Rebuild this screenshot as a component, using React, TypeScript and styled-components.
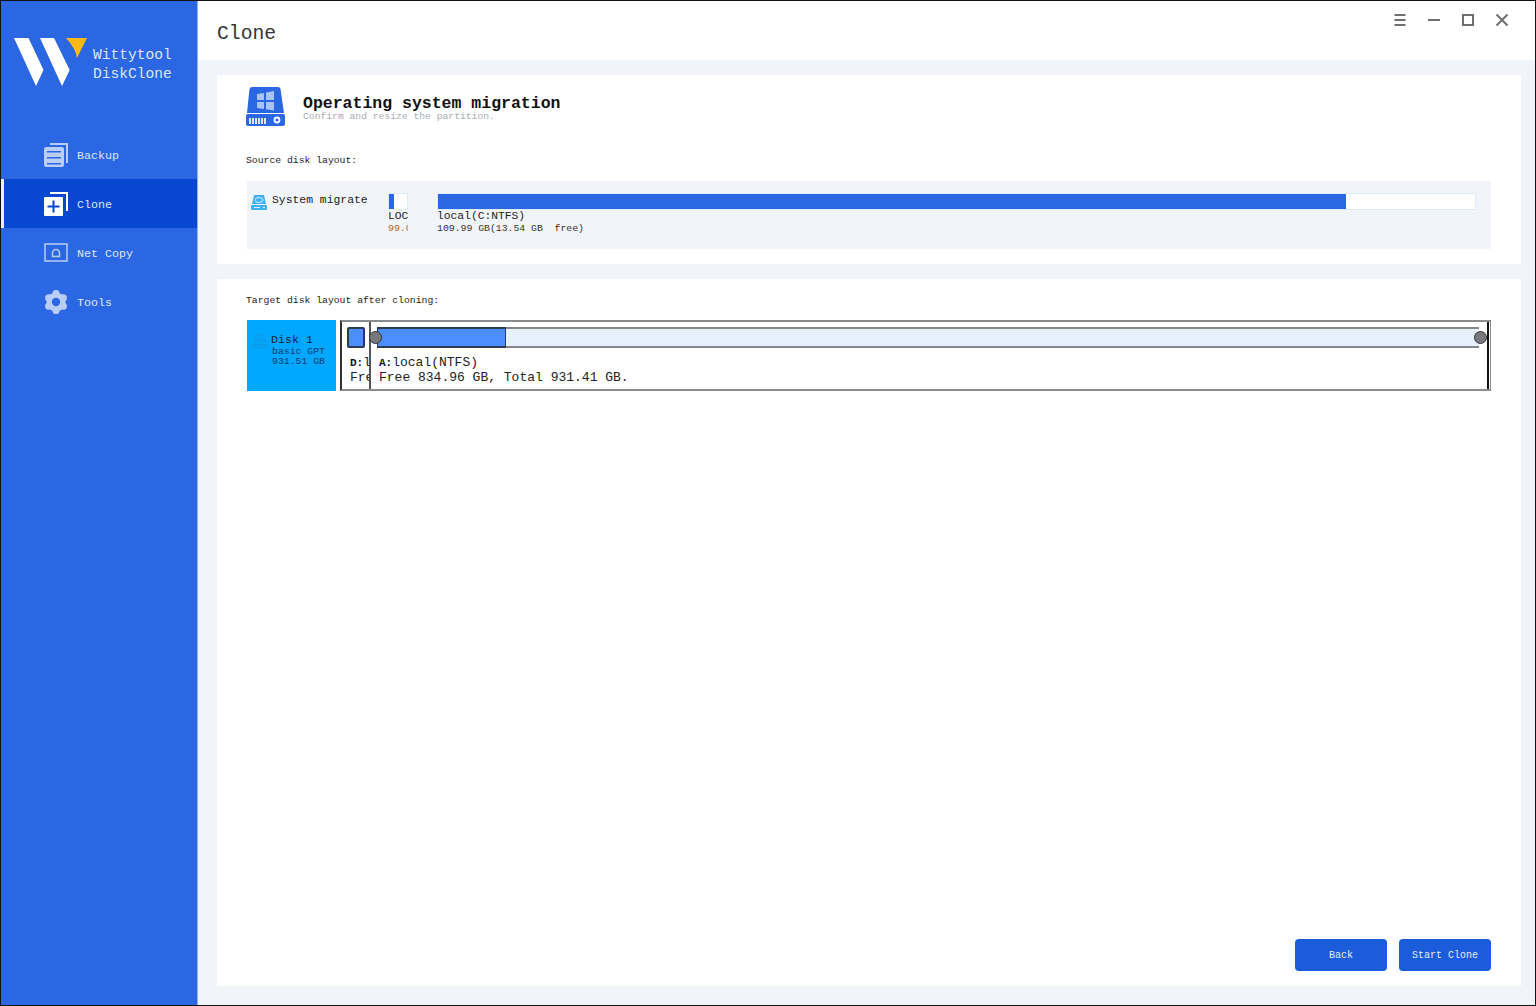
import { FC } from 'react';
import styled, { createGlobalStyle } from 'styled-components';

const GlobalStyle = createGlobalStyle`
  html, body {
    margin: 0;
    padding: 0;
    background: #fff;
  }
  body {
    font-family: "Liberation Mono", "DejaVu Sans Mono", monospace;
    color: #111;
  }
  * {
    box-sizing: border-box;
  }
`;

const Window = styled.div`
  width: 1536px;
  height: 1006px;
  display: flex;
  border: 1px solid #111;
  background: #f1f5f9;
  overflow: hidden;
`;

const Sidebar = styled.aside`
  width: 197px;
  flex-shrink: 0;
  background: #2b66e3;
  border-right: 1px solid #8fb0f0;
`;

const Brand = styled.div`
  height: 129px;
  padding: 37px 0 0 13px;
  display: flex;
  gap: 5px;
`;

const BrandName = styled.div`
  margin-top: 8px;
  color: #dfe8fb;
  font-size: 14.6px;
  line-height: 19px;
`;

const Nav = styled.nav`
  display: flex;
  flex-direction: column;
`;

const NavItem = styled.div<{ $active?: boolean }>`
  height: 49px;
  display: flex;
  align-items: center;
  gap: 9px;
  padding-left: ${(p) => (p.$active ? '40px' : '43px')};
  font-size: 11.67px;
  color: #dfe8fb;
  background: ${(p) => (p.$active ? '#0747d1' : 'transparent')};
  border-left: ${(p) => (p.$active ? '3px solid #e8eefc' : 'none')};
`;

const NavLabel = styled.span`
  padding-top: 2px;
`;

const Main = styled.main`
  flex: 1;
  display: flex;
  flex-direction: column;
  min-width: 0;
`;

const TopBar = styled.header`
  height: 59px;
  flex-shrink: 0;
  background: #fff;
  display: flex;
  justify-content: space-between;
  padding-left: 19px;
`;

const PageTitle = styled.h1`
  margin: 21px 0 0;
  font-size: 19.7px;
  line-height: 24px;
  font-weight: normal;
  color: #333;
`;

const WindowButtons = styled.div`
  display: flex;
  gap: 20px;
  padding: 12px 26px 0 0;
  height: 30px;
`;

const Content = styled.div`
  flex: 1;
  display: flex;
  flex-direction: column;
  gap: 15px;
  padding: 15px 14px 19px 19px;
  min-height: 0;
`;

const SourceCard = styled.section`
  height: 189px;
  background: #fff;
  padding: 12px 30px 0 29px;
`;

const TargetCard = styled.section`
  flex: 1;
  background: #fff;
  padding: 16px 30px 15px 29px;
  display: flex;
  flex-direction: column;
`;

const Heading = styled.div`
  display: flex;
  align-items: flex-start;
  gap: 18px;
`;

const HeadingText = styled.div`
  padding-top: 7px;
`;

const HeadingTitle = styled.div`
  font-size: 16.5px;
  line-height: 19px;
  font-weight: bold;
  color: #111;
`;

const HeadingSub = styled.div`
  margin-top: -2px;
  font-size: 9.7px;
  line-height: 11px;
  color: #a9adb3;
`;

const Caption = styled.div<{ $top: number }>`
  margin-top: ${(p) => p.$top}px;
  font-size: 9.75px;
  line-height: 12px;
  color: #222;
`;

const SourcePanel = styled.div`
  margin: 14px 0 0 1px;
  height: 68px;
  background: #f1f5f9;
  display: flex;
  padding: 12px 15px 0 4px;
`;

const SourceLabel = styled.div`
  width: 137px;
  flex-shrink: 0;
  display: flex;
  gap: 5px;
  font-size: 11.4px;
  line-height: 13px;
  color: #222;
`;

const SourceLabelText = styled.span`
  padding-top: 1px;
`;

const SourceLabelIcon = styled.span`
  margin-top: 2px;
  display: block;
  height: 16px;
`;

const SmallPartition = styled.div`
  width: 20px;
  flex-shrink: 0;
  margin-right: 29px;
  overflow: hidden;
`;

const WidePartition = styled.div`
  flex: 1;
  min-width: 0;
`;

const SourceBar = styled.div`
  height: 17px;
  background: #fff;
  border: 1px solid #deebfb;
`;

const SourceFill = styled.div`
  height: 100%;
  background: #2b66e3;
`;

const SourceName = styled.div`
  font-size: 11.3px;
  line-height: 12px;
  color: #222;
  white-space: nowrap;
`;

const SourceSize = styled.div`
  margin-top: 2px;
  font-size: 9.8px;
  line-height: 10px;
  color: #333;
  white-space: pre;
`;

const SourceSizeClipped = styled(SourceSize)`
  color: #a8651e;
`;

const TargetRow = styled.div`
  margin: 13px 0 0 1px;
  height: 71px;
  display: flex;
`;

const DiskTile = styled.div`
  width: 89px;
  flex-shrink: 0;
  background: #00a8ff;
  padding: 14px 0 0 5px;
  display: flex;
  gap: 3px;
  color: #123;
`;

const DiskInfo = styled.div`
  padding-left: 0;
`;

const DiskName = styled.div`
  font-size: 11.67px;
  line-height: 13px;
`;

const DiskMeta = styled.div`
  padding-left: 1px;
  font-size: 9.8px;
  line-height: 10px;
  color: #0d3a66;
`;

const TargetFrame = styled.div`
  flex: 1;
  margin-left: 4px;
  display: flex;
  position: relative;
  border-top: 2px solid #8a8d90;
  border-bottom: 2px solid #8a8d90;
  border-left: 2px solid #333;
  border-right: 1px solid #8a8d90;
`;

const DPartition = styled.div`
  width: 27px;
  flex-shrink: 0;
  padding: 5px 0 0 5px;
  overflow: hidden;
`;

const DLabels = styled.div`
  margin-left: 3px;
`;

const APartition = styled.div`
  flex: 1;
  border-left: 2px solid #555;
  border-right: 2px solid #111;
  margin-right: 1px;
  padding: 5px 6px 0 8px;
  min-width: 0;
`;

const MiniBar = styled.div`
  width: 18px;
  height: 21px;
  background: #4b8eff;
  border: 2px solid #2d3a55;
  border-radius: 2px;
`;

const ResizeBar = styled.div`
  position: relative;
  height: 21px;
  margin: 0 2px 0 -2px;
  background: #e7f1fd;
  border-top: 2px solid #85888b;
  border-bottom: 2px solid #85888b;
`;

const ResizeFill = styled.div`
  height: 100%;
  width: 127px;
  margin-top: -2px;
  box-sizing: content-box;
  background: #4b8eff;
  border: 2px solid #2d3a55;
  border-left-width: 1px;
  border-right-width: 1px;
`;

const Handle = styled.span<{ $side: 'left' | 'right' }>`
  position: absolute;
  top: 2px;
  ${(p) => p.$side}: -8px;
  width: 13px;
  height: 13px;
  border-radius: 50%;
  background: #77797c;
  border: 1px solid #333;
`;

const PartitionName = styled.div`
  margin-top: 8px;
  font-size: 13px;
  line-height: 13px;
  white-space: nowrap;
  color: #222;
`;

const PartitionFree = styled.div`
  margin-top: 1px;
  font-size: 13px;
  line-height: 14px;
  white-space: nowrap;
  color: #222;
`;

const DriveLetter = styled.b`
  font-size: 11px;
  color: #111;
`;

const Actions = styled.div`
  margin-top: auto;
  display: flex;
  justify-content: flex-end;
  gap: 12px;
`;

const ActionButton = styled.button`
  width: 92px;
  height: 32px;
  padding: 0;
  border: none;
  border-radius: 4px;
  background: #1a5cd9;
  color: #e8effc;
  font-family: inherit;
  font-size: 10px;
`;

const navIconColor = '#b9cdf6';

const LogoIcon: FC = () => (
  <svg width="74" height="50" viewBox="0 0 74 50">
    <path d="M0 0h14.500L29.500 32 22 48z" fill="#fff" />
    <path d="M26 0h14l15.700 32L48 48z" fill="#fff" />
    <path d="M52 0h21L63 20q-1-9-11-20z" fill="#fdb913" />
  </svg>
);

const BackupIcon: FC = () => (
  <svg width="24" height="24" viewBox="0 0 24 24">
    <path d="M6 0h18v20h-2V2H6z" fill={navIconColor} />
    <rect y="4" width="20" height="20" rx="2" fill={navIconColor} />
    <path d="M3 8h14v1.500H3zM3 14h14v1.500H3zM3 20h14v1.500H3z" fill="#2b66e3" />
  </svg>
);

const CloneIcon: FC = () => (
  <svg width="24" height="24" viewBox="0 0 24 24">
    <path d="M6 0h18v19h-2V2H6z" fill="#fff" />
    <rect y="5" width="19" height="19" rx="1" fill="#fff" />
    <path d="M8.500 8.500h2V13.500h5v2h-5v5h-2v-5h-5v-2h5z" fill="#0747d1" />
  </svg>
);

const NetCopyIcon: FC = () => (
  <svg width="24" height="19" viewBox="0 0 24 19">
    <rect x="1" y="1" width="22" height="17" fill="none" stroke={navIconColor} strokeWidth="1.500" />
    <path d="M8.500 13.500v-3.500a3.500 3.500 0 0 1 7 0v3.500z" fill="none" stroke={navIconColor} strokeWidth="1.600" />
  </svg>
);

const ToolsIcon: FC = () => (
  <svg width="24" height="24" viewBox="0 0 24 24">
    <circle cx="12" cy="12" r="9.500" fill={navIconColor} />
    <circle cx="12" cy="3.600" r="3.600" fill={navIconColor} />
    <circle cx="12" cy="20.400" r="3.600" fill={navIconColor} />
    <circle cx="4.700" cy="7.800" r="3.600" fill={navIconColor} />
    <circle cx="19.300" cy="7.800" r="3.600" fill={navIconColor} />
    <circle cx="4.700" cy="16.200" r="3.600" fill={navIconColor} />
    <circle cx="19.300" cy="16.200" r="3.600" fill={navIconColor} />
    <circle cx="12" cy="12" r="4.200" fill="#2b66e3" />
  </svg>
);

const MigrationIcon: FC = () => (
  <svg width="39" height="39" viewBox="0 0 39 39">
    <path d="M6 0h26q2 0 2.500 2L38 26H1L3.500 2Q4 0 6 0z" fill="#2b66e3" />
    <rect y="27" width="39" height="12" rx="2" fill="#2b66e3" />
    <path d="M11 7l7-1v7h-7zM20 5.500l8-1.500v9h-8zM11 15h7v7l-7-1zM20 15h8v8.500l-8-1.200z" fill="#a9c3f5" />
    <path d="M3 31h2v6H3zM6 31h2v6H6zM9 31h2v6H9zM12 31h2v6h-2zM15 31h2v6h-2zM18 31h2v6h-2z" fill="#dce7fb" />
    <circle cx="31" cy="33" r="2.500" fill="none" stroke="#fff" strokeWidth="1.800" />
  </svg>
);

const DriveIcon: FC<{ color: string; line: string }> = ({ color, line }) => (
  <svg width="16" height="15" viewBox="0 0 16 15">
    <path d="M3 0h10l2 9H1z" fill={color} />
    <ellipse cx="8" cy="5" rx="4" ry="2.500" fill="none" stroke={line} />
    <rect y="10" width="16" height="5" rx="1" fill={color} />
    <path d="M3 12h6v1H3zM12 12h2v1h-2z" fill={line} />
  </svg>
);

const WinIcon: FC<{ name: 'menu' | 'min' | 'max' | 'close' }> = ({ name }) => (
  <svg width="14" height="14" viewBox="0 0 14 14" fill="none" stroke="#6f6f6f" strokeWidth="2">
    {name === 'menu' && <path d="M1.500 2h11M1.500 7h11M1.500 12h11" />}
    {name === 'min' && <path d="M1 7h12" />}
    {name === 'max' && <rect x="2" y="2" width="10" height="10" />}
    {name === 'close' && <path d="M1.500 1.500l11 11M12.500 1.500l-11 11" />}
  </svg>
);

const App: FC = () => {
  return (
    <>
      <GlobalStyle />
      <Window>
        <Sidebar>
          <Brand>
            <LogoIcon />
            <BrandName>
              Wittytool
              <br />
              DiskClone
            </BrandName>
          </Brand>
          <Nav>
            <NavItem>
              <BackupIcon />
              <NavLabel>Backup</NavLabel>
            </NavItem>
            <NavItem $active>
              <CloneIcon />
              <NavLabel>Clone</NavLabel>
            </NavItem>
            <NavItem>
              <NetCopyIcon />
              <NavLabel>Net Copy</NavLabel>
            </NavItem>
            <NavItem>
              <ToolsIcon />
              <NavLabel>Tools</NavLabel>
            </NavItem>
          </Nav>
        </Sidebar>
        <Main>
          <TopBar>
            <PageTitle>Clone</PageTitle>
            <WindowButtons>
              <WinIcon name="menu" />
              <WinIcon name="min" />
              <WinIcon name="max" />
              <WinIcon name="close" />
            </WindowButtons>
          </TopBar>
          <Content>
            <SourceCard>
              <Heading>
                <MigrationIcon />
                <HeadingText>
                  <HeadingTitle>Operating system migration</HeadingTitle>
                  <HeadingSub>Confirm and resize the partition.</HeadingSub>
                </HeadingText>
              </Heading>
              <Caption $top={29}>Source disk layout:</Caption>
              <SourcePanel>
                <SourceLabel>
                  <SourceLabelIcon>
                    <DriveIcon color="#3fb1f5" line="#d6f0ff" />
                  </SourceLabelIcon>
                  <SourceLabelText>System migrate</SourceLabelText>
                </SourceLabel>
                <SmallPartition>
                  <SourceBar>
                    <SourceFill style={{ width: '30%' }} />
                  </SourceBar>
                  <SourceName>LOCAL</SourceName>
                  <SourceSizeClipped>99.01 MB</SourceSizeClipped>
                </SmallPartition>
                <WidePartition>
                  <SourceBar>
                    <SourceFill style={{ width: '87.600%' }} />
                  </SourceBar>
                  <SourceName>local(C:NTFS)</SourceName>
                  <SourceSize>109.99 GB(13.54 GB  free)</SourceSize>
                </WidePartition>
              </SourcePanel>
            </SourceCard>
            <TargetCard>
              <Caption $top={0}>Target disk layout after cloning:</Caption>
              <TargetRow>
                <DiskTile>
                  <DriveIcon color="#0a9eef" line="#00a8ff" />
                  <DiskInfo>
                    <DiskName>Disk 1</DiskName>
                    <DiskMeta>basic GPT</DiskMeta>
                    <DiskMeta>931.51 GB</DiskMeta>
                  </DiskInfo>
                </DiskTile>
                <TargetFrame>
                  <DPartition>
                    <MiniBar />
                    <DLabels>
                      <PartitionName>
                        <DriveLetter>D:</DriveLetter>local
                      </PartitionName>
                      <PartitionFree>Free 96.0 MB</PartitionFree>
                    </DLabels>
                  </DPartition>
                  <APartition>
                    <ResizeBar>
                      <ResizeFill />
                      <Handle $side="left" />
                      <Handle $side="right" />
                    </ResizeBar>
                    <PartitionName>
                      <DriveLetter>A:</DriveLetter>local(NTFS)
                    </PartitionName>
                    <PartitionFree>Free 834.96 GB, Total 931.41 GB.</PartitionFree>
                  </APartition>
                </TargetFrame>
              </TargetRow>
              <Actions>
                <ActionButton>Back</ActionButton>
                <ActionButton>Start Clone</ActionButton>
              </Actions>
            </TargetCard>
          </Content>
        </Main>
      </Window>
    </>
  );
};

export default App;
